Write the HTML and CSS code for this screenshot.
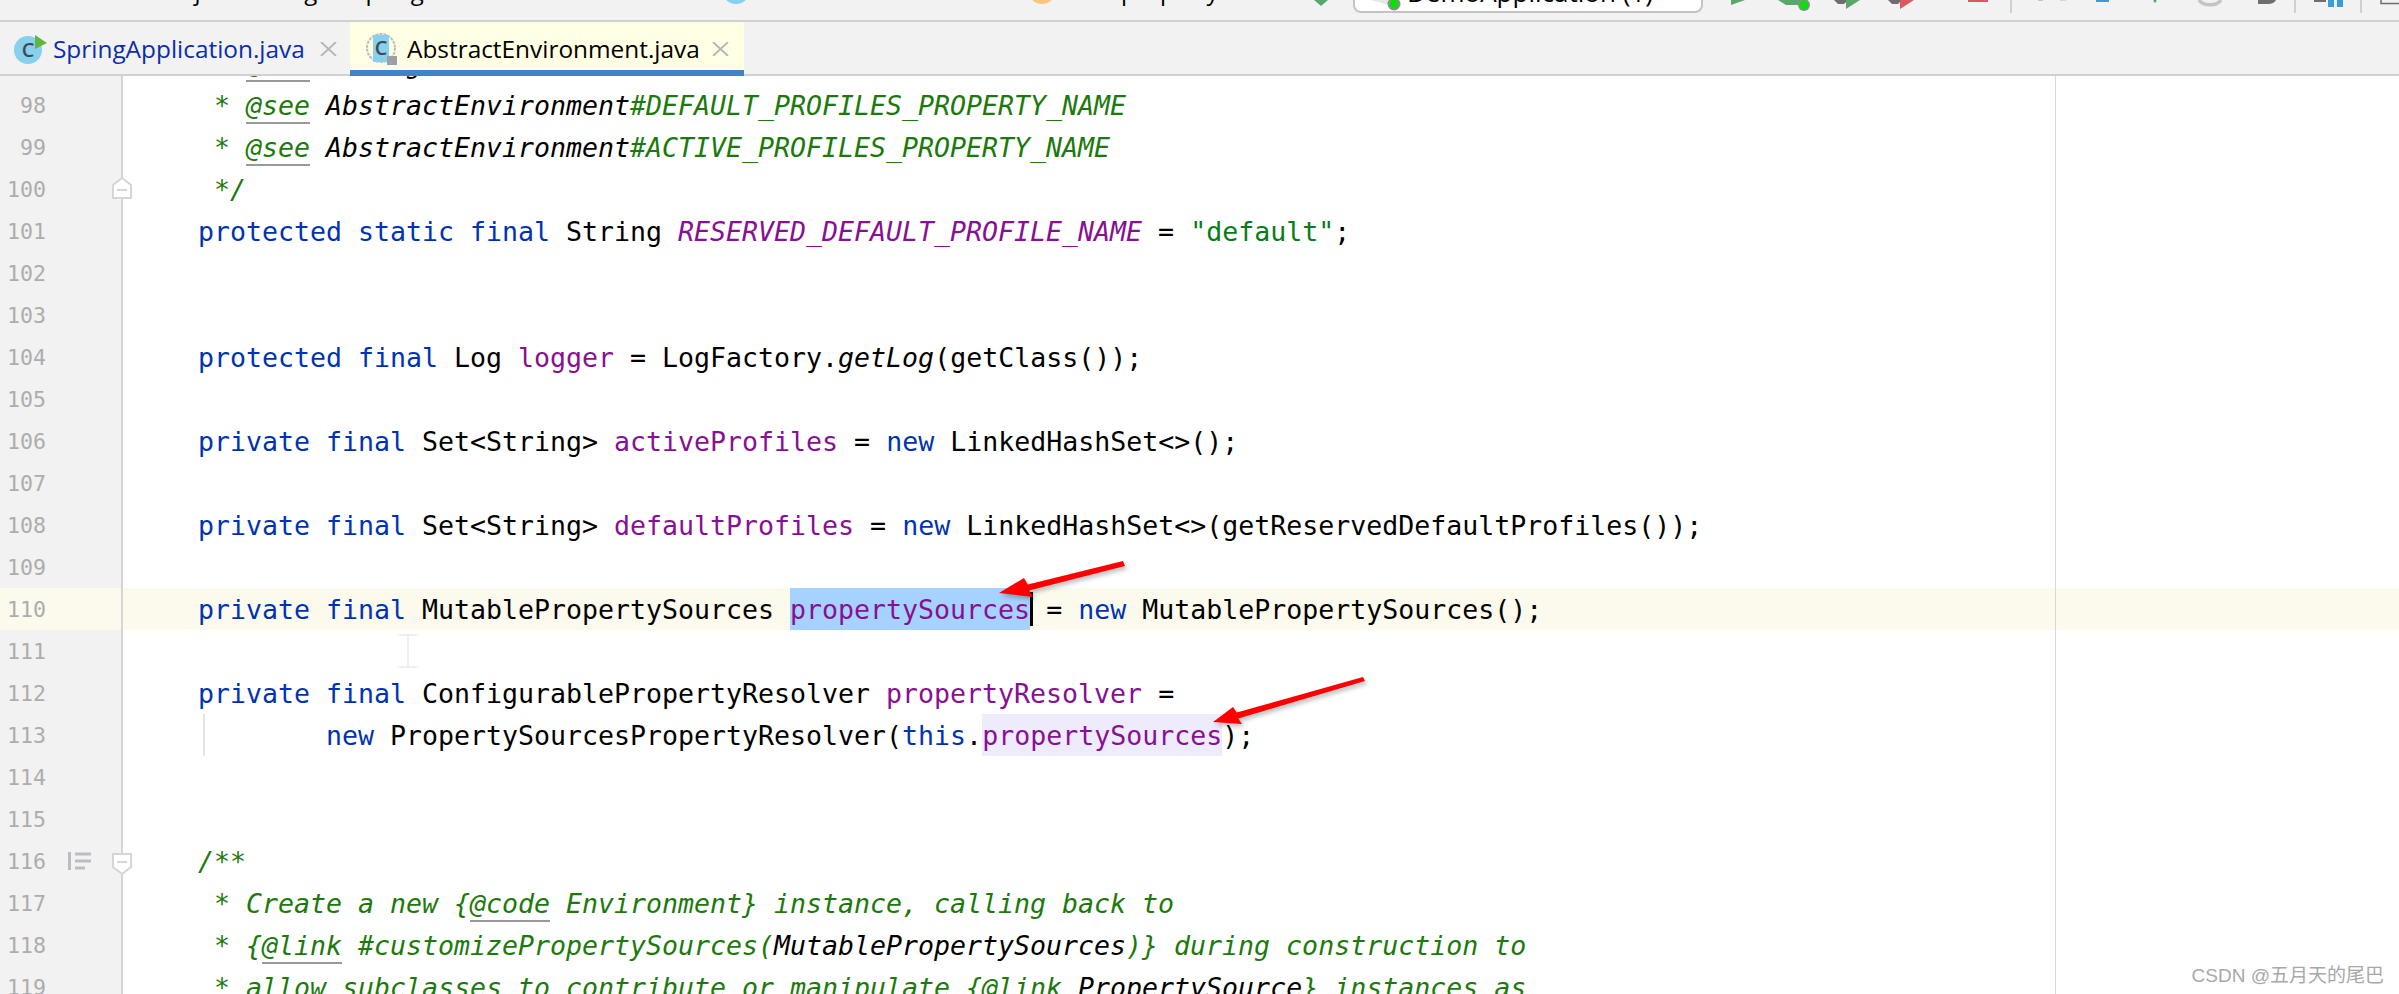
FILE: index.html
```html
<!DOCTYPE html>
<html lang="en">
<head>
<meta charset="utf-8">
<title>AbstractEnvironment.java</title>
<link rel="stylesheet" href="styles.css">
</head>
<body>
<div class="ide">
  <header class="toolbar">
    <nav class="crumbs">
      <div class="crumb first"><span>src</span><i>/</i><span>main</span><i>/</i><span>java</span><i>/</i></div>
      <div class="crumb"><span>org</span><i>/</i></div>
      <div class="crumb"><span>springframework</span><i>/</i></div>
      <div class="crumb"><span>core</span><i>/</i></div>
      <div class="crumb"><span>env</span><i>/</i></div>
      <div class="crumb iconic"><b class="dot dot-class"></b><span>AbstractEnvironment</span><i>/</i></div>
      <div class="crumb iconic"><b class="dot dot-field"></b><span>propertySources</span></div>
    </nav>
    <svg class="chevron" width="30" height="20" viewBox="0 0 30 20"><path d="M5 0H19L12 6Z" fill="#59a869"/></svg>
    <div class="run">
      <svg class="run-icon" width="36" height="13" viewBox="0 0 36 13"><path d="M2 0H24L28 6L20 5Z" fill="#dfe9df"/><circle cx="25" cy="4" r="6.5" fill="#8d8d8d"/><circle cx="25" cy="4" r="4.5" fill="#0be00b"/></svg>
      <span>DemoApplication (1)</span>
    </div>
    <svg class="tools" width="696" height="20" viewBox="1703 0 696 20">
      <path d="M1731 0H1745L1731 5Z" fill="#59a869"/>
      <path d="M1778 0H1806L1798 5H1786Z" fill="#59a869"/>
      <circle cx="1804" cy="5" r="6" fill="#8d8d8d"/><circle cx="1804" cy="5" r="4.5" fill="#0be00b"/>
      <path d="M1834 0H1848L1844 4H1838Z" fill="#6e6e6e"/><path d="M1846 0H1860L1846 9Z" fill="#59a869"/>
      <path d="M1888 0H1902L1898 4H1892Z" fill="#6e6e6e"/><path d="M1900 0H1914L1900 9Z" fill="#db5860"/>
      <rect x="1968" y="0" width="20" height="2" fill="#db5860"/>
      <rect x="2010" y="0" width="2" height="13" fill="#d0d0d0"/>
      <rect x="2038" y="0" width="5" height="1" fill="#c4c4c4"/><rect x="2060" y="0" width="6" height="1" fill="#c9dcd0"/>
      <rect x="2096" y="0" width="13" height="2" fill="#389fd6"/>
      <circle cx="2155" cy="1" r="1.5" fill="#59a869"/>
      <path d="M2199 0A12 8 0 0 0 2221 0" fill="none" stroke="#c4c4c4" stroke-width="3.5"/>
      <path d="M2258 0H2276Q2274 4 2268 4H2258Z" fill="#6e6e6e"/>
      <rect x="2294" y="0" width="2" height="13" fill="#d0d0d0"/>
      <rect x="2314" y="0" width="12" height="2" fill="#6e6e6e"/>
      <rect x="2328" y="0" width="6" height="7" fill="#389fd6"/><rect x="2337" y="0" width="6" height="7" fill="#389fd6"/>
      <rect x="2360" y="0" width="2" height="13" fill="#d0d0d0"/>
      <path d="M2381 0V3.5H2399" fill="none" stroke="#6e6e6e" stroke-width="1.5"/>
    </svg>
  </header>

  <div class="tabs">
    <div class="tab">
      <svg class="tab-icon" width="34" height="34" viewBox="0 0 34 34">
        <circle cx="15" cy="18" r="14" fill="#87d0ee"/>
        <text x="15" y="25" class="icon-c">C</text>
        <path d="M22 3L34 11L22 17Z" fill="#62b543"/>
      </svg>
      <span class="tab-name modified">SpringApplication.java</span>
      <svg class="tab-close" width="17" height="14" viewBox="0 0 17 14"><path d="M1 0L16 14M16 0L1 14" stroke="#b5b5b5" stroke-width="1.8"/></svg>
    </div>
    <div class="tab active">
      <svg class="tab-icon" width="34" height="34" viewBox="0 0 34 34">
        <circle cx="16" cy="16" r="14" fill="none" stroke="#bdbdbd" stroke-width="2" stroke-dasharray="3 1"/>
        <rect x="8" y="3" width="16" height="27" fill="#87d0ee"/>
        <text x="16" y="23" class="icon-c">C</text>
        <rect x="22" y="24" width="10" height="9" fill="#9aa0a6"/>
      </svg>
      <span class="tab-name">AbstractEnvironment.java</span>
      <svg class="tab-close" width="17" height="14" viewBox="0 0 17 14"><path d="M1 0L16 14M16 0L1 14" stroke="#b5b5b5" stroke-width="1.8"/></svg>
    </div>
  </div>

  <main class="editor">
    <div class="lines">
      <div class="line"><div class="num">97</div><pre class="code"><span class="doc">     * <u>@see</u> <span class="ref">ConfigurableEnvironment</span>#setActiveProfiles</span></pre></div>
      <div class="line"><div class="num">98</div><pre class="code"><span class="doc">     * <u>@see</u> <span class="ref">AbstractEnvironment</span>#DEFAULT_PROFILES_PROPERTY_NAME</span></pre></div>
      <div class="line"><div class="num">99</div><pre class="code"><span class="doc">     * <u>@see</u> <span class="ref">AbstractEnvironment</span>#ACTIVE_PROFILES_PROPERTY_NAME</span></pre></div>
      <div class="line"><div class="num">100<svg class="fold fold-up" width="20" height="22" viewBox="0 0 20 22"><path d="M1 21V8L10 1L19 8V21Z" fill="#fff" stroke="#d6d6d6" stroke-width="2"/><path d="M5 13H15" stroke="#d6d6d6" stroke-width="2"/></svg></div><pre class="code"><span class="doc">     */</span></pre></div>
      <div class="line"><div class="num">101</div><pre class="code">    <span class="kw">protected static final</span> String <span class="const">RESERVED_DEFAULT_PROFILE_NAME</span> = <span class="str">"default"</span>;</pre></div>
      <div class="line"><div class="num">102</div><pre class="code"></pre></div>
      <div class="line"><div class="num">103</div><pre class="code"></pre></div>
      <div class="line"><div class="num">104</div><pre class="code">    <span class="kw">protected final</span> Log <span class="field">logger</span> = LogFactory.<em>getLog</em>(getClass());</pre></div>
      <div class="line"><div class="num">105</div><pre class="code"></pre></div>
      <div class="line"><div class="num">106</div><pre class="code">    <span class="kw">private final</span> Set&lt;String&gt; <span class="field">activeProfiles</span> = <span class="kw">new</span> LinkedHashSet&lt;&gt;();</pre></div>
      <div class="line"><div class="num">107</div><pre class="code"></pre></div>
      <div class="line"><div class="num">108</div><pre class="code">    <span class="kw">private final</span> Set&lt;String&gt; <span class="field">defaultProfiles</span> = <span class="kw">new</span> LinkedHashSet&lt;&gt;(getReservedDefaultProfiles());</pre></div>
      <div class="line"><div class="num">109</div><pre class="code"></pre></div>
      <div class="line current"><div class="num">110</div><pre class="code">    <span class="kw">private final</span> MutablePropertySources <span class="field selected">propertySources<b class="caret"></b></span> = <span class="kw">new</span> MutablePropertySources();</pre></div>
      <div class="line"><div class="num">111</div><pre class="code"></pre></div>
      <div class="line"><div class="num">112</div><pre class="code">    <span class="kw">private final</span> ConfigurablePropertyResolver <span class="field">propertyResolver</span> =</pre></div>
      <div class="line"><div class="num">113</div><pre class="code"><b class="guide"></b>            <span class="kw">new</span> PropertySourcesPropertyResolver(<span class="kw">this</span>.<span class="field usage">propertySources</span>);</pre></div>
      <div class="line"><div class="num">114</div><pre class="code"></pre></div>
      <div class="line"><div class="num">115</div><pre class="code"></pre></div>
      <div class="line"><div class="num">116<svg class="javadoc" width="24" height="18" viewBox="0 0 24 18"><path d="M1.5 0V18" stroke="#b9bdc1" stroke-width="3"/><path d="M7 2H23M7 9H23M7 16H17" stroke="#b9bdc1" stroke-width="3"/></svg><svg class="fold fold-down" width="20" height="22" viewBox="0 0 20 22"><path d="M1 1V14L10 21L19 14V1Z" fill="#fff" stroke="#d6d6d6" stroke-width="2"/><path d="M5 9H15" stroke="#d6d6d6" stroke-width="2"/></svg></div><pre class="code"><span class="doc">    /**</span></pre></div>
      <div class="line"><div class="num">117</div><pre class="code"><span class="doc">     * Create a new {<u>@code</u> Environment} instance, calling back to</span></pre></div>
      <div class="line"><div class="num">118</div><pre class="code"><span class="doc">     * {<u>@link</u> #customizePropertySources(<span class="ref">MutablePropertySources</span>)} during construction to</span></pre></div>
      <div class="line"><div class="num">119</div><pre class="code"><span class="doc">     * allow subclasses to contribute or manipulate {<u>@link</u> <span class="ref">PropertySource</span>} instances as</span></pre></div>
    </div>
    <div class="margin-line"></div>
    <svg class="ibeam" width="20" height="34" viewBox="0 0 20 34"><path d="M1 1H19M10 1V33M1 33H19" fill="none" stroke="#efefef" stroke-width="2"/></svg>
    <svg class="arrows" width="420" height="200" viewBox="980 550 420 200">
      <path d="M1123 561L1125 566L1029 590.4L1033 597L999 593L1024 578L1027.8 584.6Z" fill="#f00"/>
      <path d="M1363 677L1365 681L1238.3 718.4L1242 724L1213 722L1233 707L1236.7 712.6Z" fill="#f00"/>
    </svg>
  </main>
  <div class="watermark">CSDN @五月天的尾巴</div>
</div>
</body>
</html>
```
FILE: styles.css
```css
* { box-sizing: border-box; }
html, body { margin: 0; height: 100%; overflow: hidden; background: #fff; }
.ide { position: relative; width: 2399px; height: 994px; overflow: hidden; display: flex; flex-direction: column; font-family: "Open Sans", "Noto Sans", sans-serif; }

.toolbar { flex: none; height: 22px; display: flex; background: #f2f2f2; border-bottom: 2px solid #d1d1d1; overflow: hidden; }
.crumbs { flex: none; width: 1307px; height: 34px; margin-top: -26px; display: grid; grid-template-columns: 260px 74px 224px 81px 75px 306px 1fr; font-size: 24px; line-height: 34px; color: #000; }
.crumb { display: flex; justify-content: space-between; padding-left: 20px; white-space: nowrap; }
.crumb.first { justify-content: flex-end; gap: 12px; }
.crumb.iconic { padding-left: 8px; }
.crumb i { color: #b0b0b0; font-style: normal; }
.crumb b.dot { flex: none; width: 28px; height: 28px; margin: 2px 8px 0 0; border-radius: 50%; }
.dot-class { background: #87d0ee; }
.dot-field { background: #f7c77e; }
.chevron { flex: none; margin-left: 2px; }
.run { flex: none; width: 350px; height: 13px; margin-left: 14px; display: flex; position: relative; background: #fff; border: 2px solid #c4c4c4; border-top: 0; border-radius: 0 0 8px 8px; }
.run-icon { flex: none; margin-left: 14px; }
.run span { position: absolute; left: 52px; bottom: 2px; font-size: 26px; line-height: 34px; white-space: nowrap; color: #000; }
.tools { flex: none; }

.tabs { flex: none; height: 54px; display: flex; background: #f2f2f2; border-bottom: 2px solid #d1d1d1; }
.tab { flex: none; width: 350px; height: 52px; display: flex; align-items: center; padding: 2px 0 0 13px; }
.tab.active { width: 394px; height: 54px; background: #ffffe4; border-bottom: 6px solid #4083c9; padding: 6px 0 0 15px; }
.tab-icon { flex: none; margin-right: 6px; }
.tab.active .tab-icon { margin-right: 8px; }
.icon-c { font-family: "Open Sans", sans-serif; font-size: 20px; font-weight: 600; fill: #3f4a52; text-anchor: middle; }
.tab-name { flex: none; width: 267px; font-size: 24.4px; line-height: 34px; color: #000; white-space: nowrap; }
.tab.active .tab-name { width: 305px; }
.tab-name.modified { color: #0a2fa8; }
.tab-close { flex: none; }

.editor { flex: 1; position: relative; overflow: hidden; }
.lines { margin-top: -34px; }
.line { display: flex; height: 42px; }
.num { flex: none; position: relative; width: 123px; height: 42px; padding-right: 75px; text-align: right; background: #f2f2f2; border-right: 2px solid #d5d5d5; font-family: "DejaVu Sans Mono", monospace; font-size: 21.6px; line-height: 44px; color: #adadad; }
.code { flex: 1; position: relative; margin: 0; padding-left: 11px; font-family: "DejaVu Sans Mono", monospace; font-size: 26.58px; line-height: 44px; color: #000; white-space: pre; }
.current .num, .current .code { background: #fcfaed; }
.kw { color: #0033b3; }
.field { color: #871094; }
.const { color: #871094; font-style: italic; }
.str { color: #067d17; }
.doc { color: #1c7a0c; font-style: italic; }
.doc u { text-decoration: none; border-bottom: 2px solid #999; padding-bottom: 1px; }
.ref { color: #000; }
em { font-style: italic; }
.selected { display: inline-block; position: relative; height: 42px; vertical-align: top; background: #a6d2ff; }
.usage { display: inline-block; height: 42px; vertical-align: top; background: #edebfc; }
.caret { position: absolute; left: 100%; top: 4px; width: 3px; height: 34px; background: #000; }
.guide { position: absolute; left: 80px; top: 0; width: 2px; height: 42px; background: #e4e4e4; }
.fold { position: absolute; left: 112px; z-index: 2; }
.fold-up { top: 9px; }
.fold-down { top: 13px; }
.javadoc { position: absolute; left: 68px; top: 12px; }

.margin-line { position: absolute; left: 2055px; top: 0; bottom: 0; width: 1px; background: #d8d8d8; }
.ibeam { position: absolute; left: 398px; top: 558px; }
.arrows { position: absolute; left: 980px; top: 474px; filter: drop-shadow(2px 3px 2px rgba(0,0,0,.25)); }
.watermark { position: absolute; right: 15px; top: 963px; font-family: "Liberation Sans", "Noto Sans CJK SC", sans-serif; font-size: 19px; line-height: 26px; color: #a8a8a8; }
```
